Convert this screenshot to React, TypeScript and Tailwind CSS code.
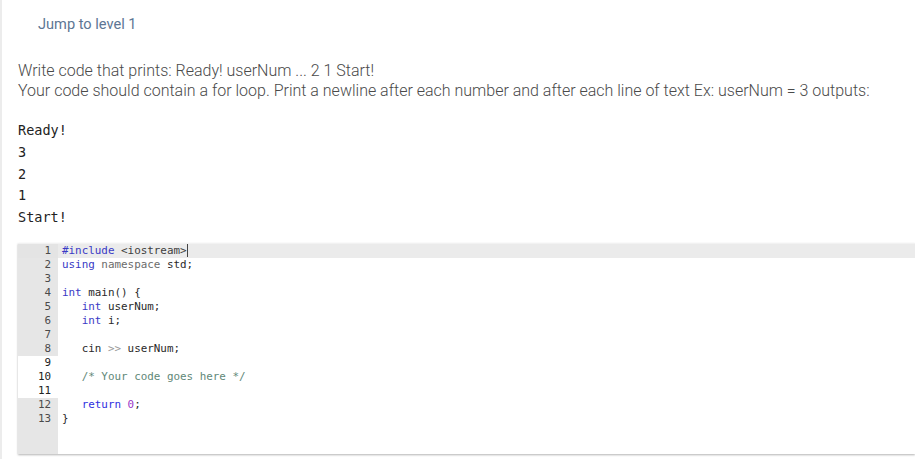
const codeLines: { n: number; editable?: boolean; active?: boolean; content: React.ReactNode }[] = [
  {
    n: 1,
    active: true,
    content: (
      <>
        <span className="text-[#3a3ac6]">#include</span> <span className="text-[#3d3d3d]">&lt;iostream&gt;</span>
        <span className="inline-block w-px h-[13px] bg-[#444] align-middle" />
      </>
    ),
  },
  {
    n: 2,
    content: (
      <>
        <span className="text-[#3a3ac6]">using</span> <span className="text-[#6b6b6b]">namespace</span> std;
      </>
    ),
  },
  { n: 3, content: "" },
  {
    n: 4,
    content: (
      <>
        <span className="text-[#3a3ac6]">int</span> main() {"{"}
      </>
    ),
  },
  {
    n: 5,
    content: (
      <>
        {"   "}
        <span className="text-[#3a3ac6]">int</span> userNum;
      </>
    ),
  },
  {
    n: 6,
    content: (
      <>
        {"   "}
        <span className="text-[#3a3ac6]">int</span> i;
      </>
    ),
  },
  { n: 7, content: "" },
  {
    n: 8,
    content: (
      <>
        {"   "}cin <span className="text-[#999]">&gt;&gt;</span> userNum;
      </>
    ),
  },
  { n: 9, editable: true, content: "" },
  {
    n: 10,
    editable: true,
    content: (
      <>
        {"   "}
        <span className="text-[#5f8878]">/* Your code goes here */</span>
      </>
    ),
  },
  { n: 11, editable: true, content: "" },
  {
    n: 12,
    content: (
      <>
        {"   "}
        <span className="text-[#2f2fe0]">return</span> <span className="text-[#9a35c8]">0</span>;
      </>
    ),
  },
  { n: 13, content: "}" },
];

const output = ["Ready!", "3", "2", "1", "Start!"];

export default function App() {
  return (
    <div className="w-[915px] h-[459px] overflow-hidden bg-white border-l-2 border-[#ececec] font-['Roboto',sans-serif]">
      <div className="pt-[15px] pl-[36px] text-[14.6px] leading-[18px] text-[#5d7694]">Jump to level 1</div>

      <div className="mt-[28px] pl-4 text-[16px] leading-[20px] font-light text-[#4a4a4a]">
        <p>Write code that prints: Ready! userNum ... 2 1 Start!</p>
        <p>
          Your code should contain a for loop. Print a newline after each number and after each line of text Ex:
          userNum = 3 outputs:
        </p>
      </div>

      <div className="mt-[19px] pl-4 font-['DejaVu_Sans_Mono',monospace] text-[13.5px] leading-[21.75px] text-[#222]">
        {output.map((line, i) => (
          <div key={i}>{line}</div>
        ))}
      </div>

      <div className="mt-[14px] ml-4 h-[211px] flex bg-white shadow-[0_1px_2px_rgba(0,0,0,0.3)] border-t border-[#f2f2f2] font-['DejaVu_Sans_Mono',monospace] text-[10.9px] leading-[14px]">
        <div className="w-[40px] bg-[#e6e6e6] text-right">
          {codeLines.map((l) => (
            <div
              key={l.n}
              className={`h-[14px] pr-[7px] ${l.editable ? "bg-white text-[#222]" : "text-[#4a4a4a]"} ${
                l.active ? "bg-[#e4e4e4]" : ""
              }`}
            >
              {l.n}
            </div>
          ))}
        </div>
        <div className="flex-1">
          {codeLines.map((l) => (
            <div
              key={l.n}
              className={`h-[14px] pl-[4px] whitespace-pre text-[#2a2a2a] ${l.active ? "bg-[#ebebeb]" : ""}`}
            >
              {l.content}
            </div>
          ))}
        </div>
      </div>
    </div>
  );
}
